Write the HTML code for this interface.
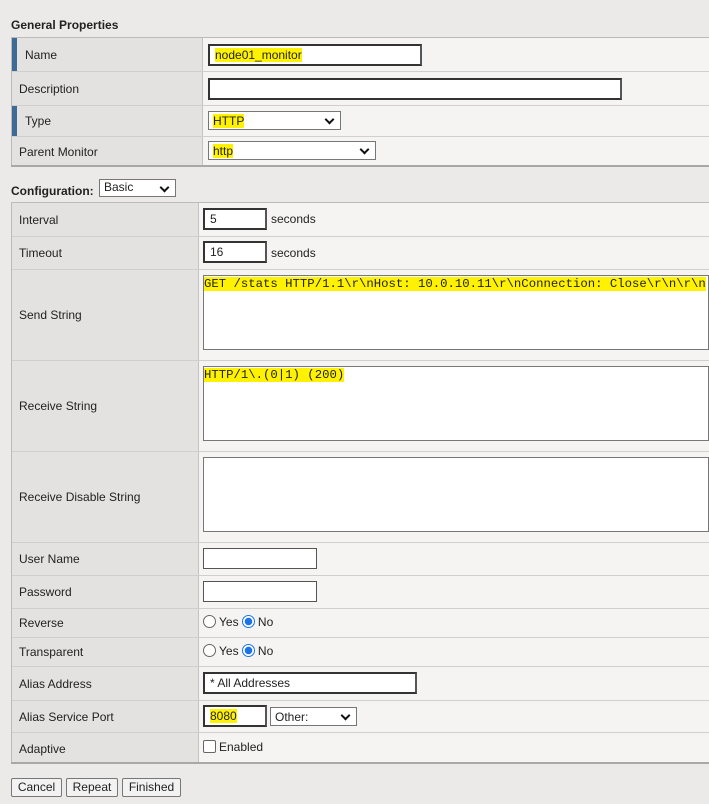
<!DOCTYPE html>
<html><head><meta charset="utf-8"><style>
*{box-sizing:border-box}
body{margin:0;width:709px;height:804px;background:#ebeae8;font-family:"Liberation Sans",Arial,sans-serif;font-size:12px;color:#222;position:relative;overflow:hidden}
.a{position:absolute}
.tbl{position:absolute;left:11px;right:0;border-top:1px solid #bbb;border-left:1px solid #bbb}
.bl{position:absolute;left:11px;right:0;height:2px;background:#a9a8a6}
.row{position:absolute;left:0;right:0;border-bottom:1px solid #d0cfcd}
.lab{position:absolute;left:0;top:0;bottom:0;background:#e3e2e0;border-right:1px solid #c4c3c1;padding-left:7px;display:flex;align-items:center}
.val{position:absolute;top:0;bottom:0;right:0;background:#f5f4f3}
.req{border-left:5px solid #3e6a98;padding-left:8px}
.in{position:absolute;background:#fff;border:2px solid #333;border-right-color:#555;font-size:12px;padding:2px 5px;line-height:15px}
.sel{position:absolute;background:#fff;border:1px solid #777;font-size:12px;padding:2px 4px;line-height:15px}
.sel:after{content:"";position:absolute;right:7px;top:4px;width:5px;height:5px;border-right:2px solid #111;border-bottom:2px solid #111;transform:rotate(45deg)}
.ta{position:absolute;background:#fff;border:1px solid #777;font-family:"Liberation Mono",monospace;font-size:12.3px;padding:1px 0px;white-space:pre;overflow:hidden}
.hl{background:#fff200}
.btn{position:absolute;top:778px;height:19px;border:1px solid #777;border-radius:2px;background:#f2f2f2;font-size:12px;line-height:17px;text-align:center}
.radio{display:inline-block;width:13px;height:13px;border:1px solid #666;border-radius:50%;background:#fff;vertical-align:-2px;margin-right:3px}
.rsel{border-color:#1a73e8;background:radial-gradient(circle,#1a73e8 3.5px,#fff 4px)}
</style></head><body>
<div class="a" style="left:11px;top:18px;font-weight:bold;font-size:12px">General Properties</div>
<div class="tbl" style="top:37px;height:130px">
 <div class="row" style="top:0;height:34px"><div class="lab req" style="width:191px">Name</div><div class="val" style="left:191px"></div></div>
 <div class="row" style="top:34px;height:34px"><div class="lab" style="width:191px">Description</div><div class="val" style="left:191px"></div></div>
 <div class="row" style="top:68px;height:31px"><div class="lab req" style="width:191px">Type</div><div class="val" style="left:191px"></div></div>
 <div class="row" style="top:99px;height:30px;border-bottom:none"><div class="lab" style="width:191px">Parent Monitor</div><div class="val" style="left:191px"></div></div>
</div>
<div class="bl" style="top:165px"></div>
<div class="in" style="left:208px;top:44px;width:214px;height:22px"><span class="hl">node01_monitor</span></div>
<div class="in" style="left:208px;top:78px;width:414px;height:22px"></div>
<div class="sel" style="left:208px;top:111px;width:133px;height:19px"><span class="hl">HTTP</span></div>
<div class="sel" style="left:208px;top:141px;width:168px;height:19px"><span class="hl">http</span></div>

<div class="a" style="left:11px;top:184px;font-weight:bold;font-size:12px">Configuration:</div>
<div class="sel" style="left:99px;top:179px;width:77px;height:18px;padding-top:0">Basic</div>

<div class="tbl" style="top:202px;height:562px">
 <div class="row" style="top:0;height:34px"><div class="lab" style="width:187px">Interval</div><div class="val" style="left:187px"></div></div>
 <div class="row" style="top:34px;height:33px"><div class="lab" style="width:187px">Timeout</div><div class="val" style="left:187px"></div></div>
 <div class="row" style="top:67px;height:91px"><div class="lab" style="width:187px">Send String</div><div class="val" style="left:187px"></div></div>
 <div class="row" style="top:158px;height:91px"><div class="lab" style="width:187px">Receive String</div><div class="val" style="left:187px"></div></div>
 <div class="row" style="top:249px;height:91px"><div class="lab" style="width:187px">Receive Disable String</div><div class="val" style="left:187px"></div></div>
 <div class="row" style="top:340px;height:33px"><div class="lab" style="width:187px">User Name</div><div class="val" style="left:187px"></div></div>
 <div class="row" style="top:373px;height:33px"><div class="lab" style="width:187px">Password</div><div class="val" style="left:187px"></div></div>
 <div class="row" style="top:406px;height:29px"><div class="lab" style="width:187px">Reverse</div><div class="val" style="left:187px"></div></div>
 <div class="row" style="top:435px;height:29px"><div class="lab" style="width:187px">Transparent</div><div class="val" style="left:187px"></div></div>
 <div class="row" style="top:464px;height:34px"><div class="lab" style="width:187px">Alias Address</div><div class="val" style="left:187px"></div></div>
 <div class="row" style="top:498px;height:32px"><div class="lab" style="width:187px">Alias Service Port</div><div class="val" style="left:187px"></div></div>
 <div class="row" style="top:530px;height:31px;border-bottom:none"><div class="lab" style="width:187px">Adaptive</div><div class="val" style="left:187px"></div></div>
</div>
<div class="bl" style="top:762px"></div>
<div class="in" style="left:203px;top:208px;width:64px;height:22px">5</div>
<div class="a" style="left:271px;top:212px">seconds</div>
<div class="in" style="left:203px;top:241px;width:64px;height:22px">16</div>
<div class="a" style="left:271px;top:246px">seconds</div>
<div class="ta" style="left:203px;top:275px;width:506px;height:75px"><span class="hl">GET /stats HTTP/1.1\r\nHost: 10.0.10.11\r\nConnection: Close\r\n\r\n</span></div>
<div class="ta" style="left:203px;top:366px;width:506px;height:75px"><span class="hl">HTTP/1\.(0|1) (200)</span></div>
<div class="ta" style="left:203px;top:457px;width:506px;height:75px"></div>
<div class="in" style="left:203px;top:548px;width:114px;height:21px;border-width:1px;border-color:#555"></div>
<div class="in" style="left:203px;top:581px;width:114px;height:21px;border-width:1px;border-color:#555"></div>
<div class="a" style="left:203px;top:615px"><span class="radio"></span>Yes <span class="radio rsel"></span>No</div>
<div class="a" style="left:203px;top:644px"><span class="radio"></span>Yes <span class="radio rsel"></span>No</div>
<div class="in" style="left:203px;top:672px;width:214px;height:22px">* All Addresses</div>
<div class="in" style="left:203px;top:705px;width:64px;height:22px"><span class="hl">8080</span></div>
<div class="sel" style="left:270px;top:707px;width:87px;height:19px">Other:</div>
<div class="a" style="left:203px;top:740px"><span style="display:inline-block;width:13px;height:13px;border:1px solid #666;border-radius:2px;background:#fff;vertical-align:-2px;margin-right:3px"></span>Enabled</div>

<div class="btn" style="left:11px;width:51px">Cancel</div>
<div class="btn" style="left:66px;width:52px">Repeat</div>
<div class="btn" style="left:122px;width:59px">Finished</div>
</body></html>
